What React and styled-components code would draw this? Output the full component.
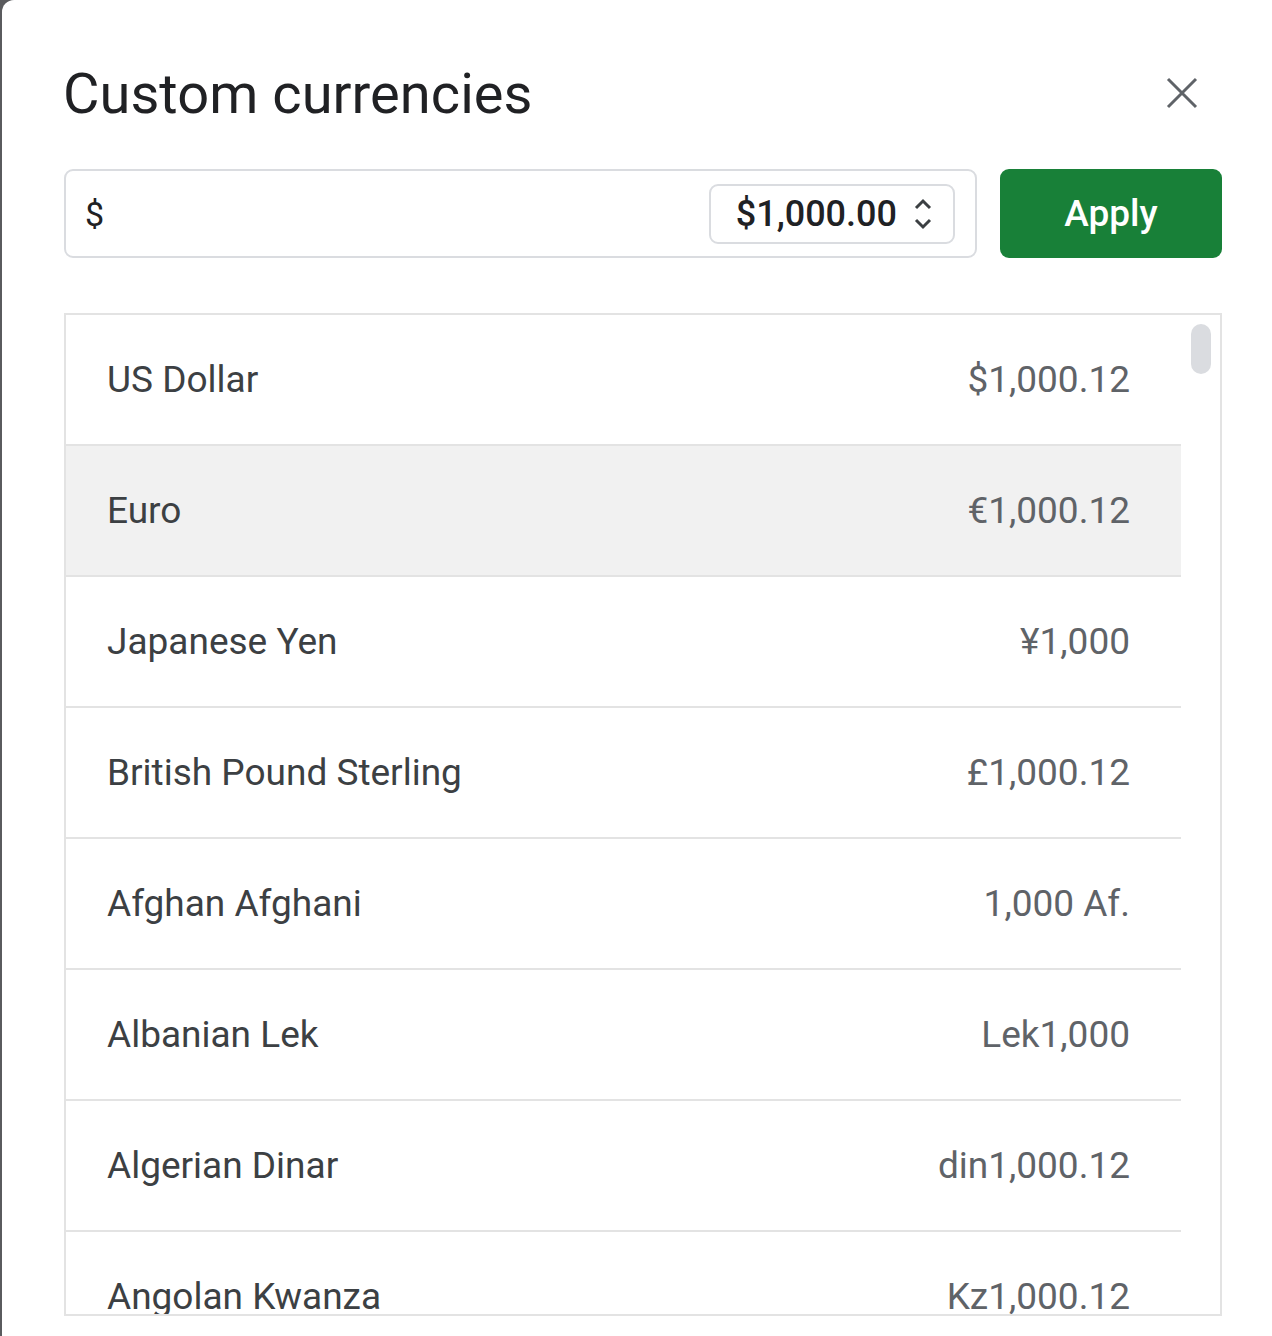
import React from "react";
import styled, { createGlobalStyle } from "styled-components";

const GlobalStyle = createGlobalStyle`
  html, body {
    margin: 0;
    padding: 0;
    background: #5a5b5e;
  }
  body {
    font-family: Roboto, "Liberation Sans", Arial, sans-serif;
  }
`;

const Dialog = styled.div`
  margin-left: 2px;
  height: 1336px;
  box-sizing: border-box;
  background: #ffffff;
  border-top-left-radius: 12px;
  padding: 62px 50px 0 62px;
  overflow: hidden;
`;

const Header = styled.div`
  display: flex;
  align-items: center;
  justify-content: space-between;
  height: 64px;
`;

const Title = styled.h1`
  margin: 0 0 0 -1px;
  font-size: 56px;
  line-height: 64px;
  font-weight: 400;
  color: #202124;
  letter-spacing: 0.05px;
`;

const CloseButton = styled.button`
  width: 48px;
  height: 48px;
  margin-right: 16px;
  margin-top: -3px;
  padding: 0;
  border: none;
  background: transparent;
  display: flex;
  align-items: center;
  justify-content: center;
  cursor: pointer;
`;

const Toolbar = styled.div`
  display: flex;
  align-items: center;
  gap: 23px;
  margin-top: 43px;
`;

const FormatField = styled.div`
  flex: 1;
  height: 89px;
  box-sizing: border-box;
  border: 2px solid #dadce0;
  border-radius: 9px;
  display: flex;
  align-items: center;
  padding: 0 20px 0 19px;
`;

const FormatInput = styled.div`
  flex: 1;
  font-size: 34px;
  color: #202124;
`;

const Stepper = styled.div`
  height: 60px;
  box-sizing: border-box;
  border: 2px solid #dadce0;
  border-radius: 9px;
  display: flex;
  align-items: center;
  gap: 16px;
  padding: 0 20px 0 25px;
  font-size: 36px;
  font-weight: 500;
  color: #202124;
`;

const ApplyButton = styled.button`
  width: 222px;
  height: 89px;
  border: none;
  border-radius: 9px;
  background: #188038;
  color: #ffffff;
  font-family: Roboto, "Liberation Sans", Arial, sans-serif;
  font-size: 37px;
  font-weight: 500;
  cursor: pointer;
`;

const ListBox = styled.div`
  margin-top: 55px;
  height: 1003px;
  box-sizing: border-box;
  border: 2px solid #e3e3e3;
  display: flex;
  overflow: hidden;
`;

const Rows = styled.div`
  flex: 1;
  display: flex;
  flex-direction: column;
`;

const Row = styled.div`
  flex: 0 0 auto;
  height: 129px;
  border-bottom: 2px solid #e3e3e3;
  display: flex;
  align-items: center;
  justify-content: space-between;
  padding: 0 51px 0 41px;
  background: ${(p) => (p.$active ? "#f1f1f1" : "#ffffff")};
  font-size: 37px;
`;

const Name = styled.span`
  color: #3c4043;
`;

const Value = styled.span`
  color: #5f6368;
`;

const ScrollTrack = styled.div`
  width: 39px;
  padding: 9px 0 0 10px;
  box-sizing: border-box;
`;

const ScrollThumb = styled.div`
  width: 20px;
  height: 50px;
  border-radius: 10px;
  background: #dadce0;
`;

const currencies = [
  { name: "US Dollar", value: "$1,000.12" },
  { name: "Euro", value: "€1,000.12", active: true },
  { name: "Japanese Yen", value: "¥1,000" },
  { name: "British Pound Sterling", value: "£1,000.12" },
  { name: "Afghan Afghani", value: "1,000 Af." },
  { name: "Albanian Lek", value: "Lek1,000" },
  { name: "Algerian Dinar", value: "din1,000.12" },
  { name: "Angolan Kwanza", value: "Kz1,000.12" },
];

function CloseIcon() {
  return (
    <svg width="32" height="32" viewBox="0 0 32 32">
      <path d="M2 2 L30 30 M30 2 L2 30" stroke="#5f6368" strokeWidth="3" fill="none" />
    </svg>
  );
}

function UpDownIcon() {
  return (
    <svg width="20" height="34" viewBox="0 0 20 34">
      <path
        d="M3 11 L10 4 L17 11 M3 23 L10 30 L17 23"
        stroke="#3c4043"
        strokeWidth="3"
        fill="none"
      />
    </svg>
  );
}

export default function App() {
  return (
    <>
      <GlobalStyle />
      <Dialog>
        <Header>
          <Title>Custom currencies</Title>
          <CloseButton aria-label="Close">
            <CloseIcon />
          </CloseButton>
        </Header>
        <Toolbar>
          <FormatField>
            <FormatInput>$</FormatInput>
            <Stepper>
              $1,000.00
              <UpDownIcon />
            </Stepper>
          </FormatField>
          <ApplyButton>Apply</ApplyButton>
        </Toolbar>
        <ListBox>
          <Rows>
            {currencies.map((c) => (
              <Row key={c.name} $active={c.active}>
                <Name>{c.name}</Name>
                <Value>{c.value}</Value>
              </Row>
            ))}
          </Rows>
          <ScrollTrack>
            <ScrollThumb />
          </ScrollTrack>
        </ListBox>
      </Dialog>
    </>
  );
}
